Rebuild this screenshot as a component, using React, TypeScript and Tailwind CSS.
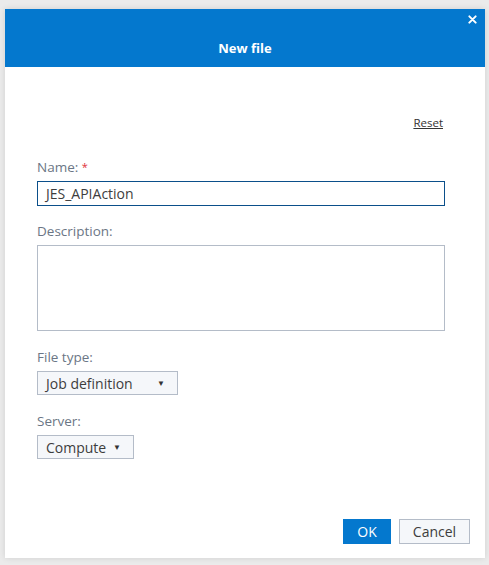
import React from 'react'

const FONT = { fontFamily: '"Open Sans", Lato, "Liberation Sans", sans-serif' }

function Label({ children }: { children: React.ReactNode }) {
  return <div className="text-[13.5px] leading-[16px] text-[#6b7685] mb-[6px]">{children}</div>
}

function Select({ value, width }: { value: string; width: string }) {
  return (
    <div className={`${width} h-[24px] border border-[#b4bcc8] bg-[#f5f7fa] flex items-center justify-between pl-[8px] pr-[12px]`}>
      <span className="text-[14px] text-[#3d3d3d]">{value}</span>
      <span className="text-[8px] text-[#333]">▼</span>
    </div>
  )
}

export default function App() {
  return (
    <div className="w-[489px] h-[565px] bg-[#ebebeb] pt-[9px] pl-[5px]" style={FONT}>
      <div className="w-[480px] h-[549px] bg-white flex flex-col shadow-[0_0_6px_rgba(0,0,0,0.12)]">
        {/* Header */}
        <div className="h-[58px] bg-[#0478ce] relative flex items-end justify-center pb-[10px]">
          <button className="absolute right-[8px] top-[6px] text-white">
            <svg width="9" height="9" viewBox="0 0 10 10" fill="none" stroke="white" strokeWidth="2.2" strokeLinecap="round">
              <path d="M1.5 1.5l7 7M8.5 1.5l-7 7" />
            </svg>
          </button>
          <h1 className="text-[13px] font-bold text-white leading-[18px]">New file</h1>
        </div>

        {/* Body */}
        <div className="flex-1 px-[32px] pt-[49px]">
          <div className="flex justify-end pr-[10px]">
            <a className="text-[11.5px] text-[#333] underline leading-[14px]">Reset</a>
          </div>

          <div className="mt-[29px]">
            <Label>
              Name: <span className="text-[#e0313a] text-[11px] align-top">*</span>
            </Label>
            <div className="w-[408px] h-[25px] border border-[#0b4f8a] flex items-center px-[8px] text-[14px] text-[#3d3d3d]">
              JES_APIAction
            </div>
          </div>

          <div className="mt-[17px]">
            <Label>Description:</Label>
            <div className="w-[408px] h-[86px] border border-[#b4bcc8]" />
          </div>

          <div className="mt-[18px]">
            <Label>File type:</Label>
            <Select value="Job definition" width="w-[141px]" />
          </div>

          <div className="mt-[18px]">
            <Label>Server:</Label>
            <Select value="Compute" width="w-[97px]" />
          </div>
        </div>

        {/* Footer */}
        <div className="flex justify-end gap-[8px] pr-[15px] pb-[14px]">
          <button className="w-[48px] h-[25px] bg-[#0478ce] text-white text-[14px]">OK</button>
          <button className="w-[71px] h-[25px] bg-[#f5f7fa] border border-[#b4bcc8] text-[#3d3d3d] text-[14px]">Cancel</button>
        </div>
      </div>
    </div>
  )
}
